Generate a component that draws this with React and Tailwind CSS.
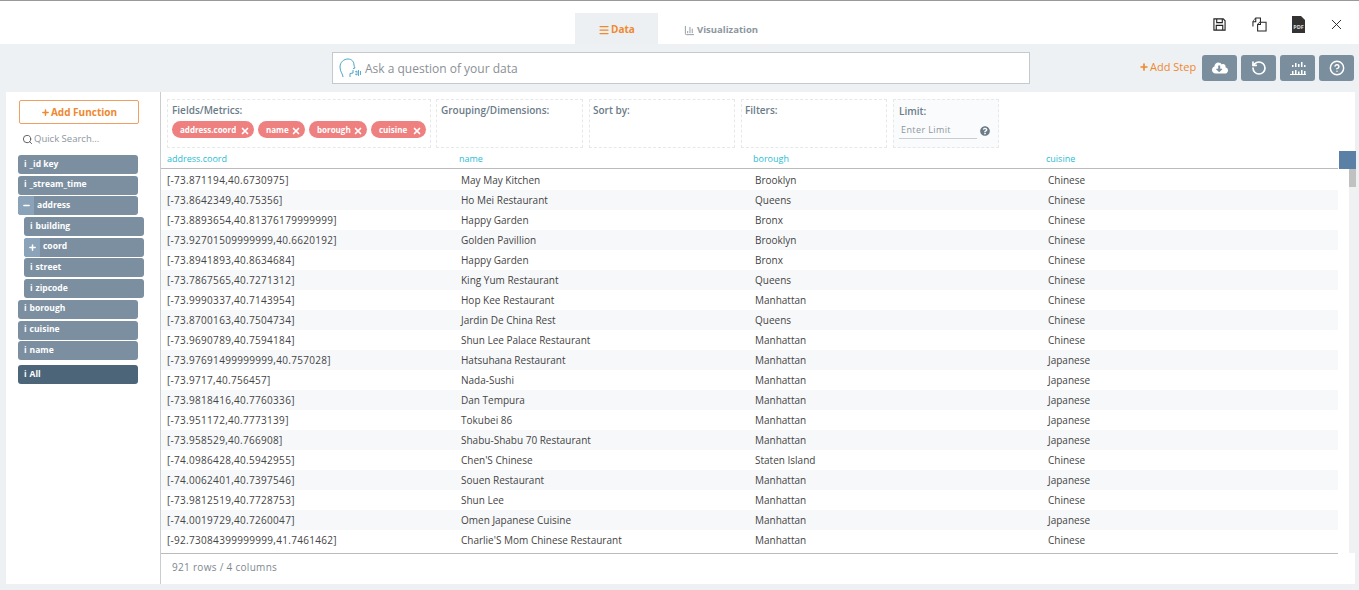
import { Plus, Minus, Search, Menu, BarChart3, X, RotateCcw, CircleHelp } from "lucide-react"
import { FaCloudDownloadAlt, FaQuestionCircle } from "react-icons/fa"

const rows = [
  ["[-73.871194,40.6730975]", "May May Kitchen", "Brooklyn", "Chinese"],
  ["[-73.8642349,40.75356]", "Ho Mei Restaurant", "Queens", "Chinese"],
  ["[-73.8893654,40.81376179999999]", "Happy Garden", "Bronx", "Chinese"],
  ["[-73.92701509999999,40.6620192]", "Golden Pavillion", "Brooklyn", "Chinese"],
  ["[-73.8941893,40.8634684]", "Happy Garden", "Bronx", "Chinese"],
  ["[-73.7867565,40.7271312]", "King Yum Restaurant", "Queens", "Chinese"],
  ["[-73.9990337,40.7143954]", "Hop Kee Restaurant", "Manhattan", "Chinese"],
  ["[-73.8700163,40.7504734]", "Jardin De China Rest", "Queens", "Chinese"],
  ["[-73.9690789,40.7594184]", "Shun Lee Palace Restaurant", "Manhattan", "Chinese"],
  ["[-73.97691499999999,40.757028]", "Hatsuhana Restaurant", "Manhattan", "Japanese"],
  ["[-73.9717,40.756457]", "Nada-Sushi", "Manhattan", "Japanese"],
  ["[-73.9818416,40.7760336]", "Dan Tempura", "Manhattan", "Japanese"],
  ["[-73.951172,40.7773139]", "Tokubei 86", "Manhattan", "Japanese"],
  ["[-73.958529,40.766908]", "Shabu-Shabu 70 Restaurant", "Manhattan", "Japanese"],
  ["[-74.0986428,40.5942955]", "Chen'S Chinese", "Staten Island", "Chinese"],
  ["[-74.0062401,40.7397546]", "Souen Restaurant", "Manhattan", "Japanese"],
  ["[-73.9812519,40.7728753]", "Shun Lee", "Manhattan", "Chinese"],
  ["[-74.0019729,40.7260047]", "Omen Japanese Cuisine", "Manhattan", "Japanese"],
  ["[-92.73084399999999,41.7461462]", "Charlie'S Mom Chinese Restaurant", "Manhattan", "Chinese"],
]

function Field({ label, sub, mark = "i", dark }) {
  return (
    <div className={`flex h-[19px] w-[120px] items-center rounded-[3px] text-[8.5px] font-bold text-white ${sub ? "ml-[6px]" : ""} ${dark ? "bg-[#4d6579]" : "bg-[#7c8fa0]"}`}>
      {mark === "i" ? (
        <span className="pb-[1px] pl-[6px] pr-[3px]">i</span>
      ) : (
        <span className="mr-[3px] flex h-full w-[16px] items-center justify-center rounded-l-[3px] bg-[#8aa3b8]">
          {mark === "+" ? <Plus size={9} strokeWidth={4} /> : <Minus size={9} strokeWidth={4} />}
        </span>
      )}
      <span className="pb-[1px]">{label}</span>
    </div>
  )
}

function Chip({ label, width }) {
  return (
    <span className={`flex h-[17px] items-center justify-between rounded-full bg-[#ee8080] pl-[8px] pr-[4px] text-[8px] font-bold text-white ${width}`}>
      {label}
      <X size={10} strokeWidth={4} className="mt-[2px]" />
    </span>
  )
}

function FilterBox({ title, width }) {
  return (
    <div className={`h-[49px] border border-dashed border-[#e6e8ea] pt-[3px] text-[10px] font-semibold text-[#6b7b88] ${width}`}>
      {title}
    </div>
  )
}

function ToolButton({ children }) {
  return (
    <button className="flex h-[26px] w-[35px] items-center justify-center rounded-[3px] bg-[#7b8e9e] text-white">
      {children}
    </button>
  )
}

function App() {
  return (
    <div className="h-[590px] w-[1359px] overflow-hidden bg-[#edf1f4] font-['Open_Sans',sans-serif]">
      {/* top bar */}
      <div className="flex h-[44px] border-t border-[#999] bg-white">
        <div className="ml-[575px] mt-[12px] flex h-[31px] w-[83px] items-center justify-center gap-[1px] bg-[#edf0f3] pt-[2px] text-[10px] font-bold text-[#f0882e]">
          <Menu size={12} strokeWidth={2.5} />
          Data
        </div>
        <div className="ml-[26px] mt-[12px] flex h-[31px] items-center gap-[2px] pt-[4px] text-[9.5px] font-bold text-[#8c969e]">
          <BarChart3 size={11} />
          Visualization
        </div>
        <div className="ml-[455px] mt-[10px] flex h-[26px] items-center text-[#222]">
          <svg width="13" height="13" viewBox="0 0 14 14" fill="none" stroke="#222" strokeWidth="1.2">
            <path d="M1 1h10l2 2v10H1z" />
            <path d="M4 1v4h6V1M3.500 13V8h7v5" />
          </svg>
          <svg width="15" height="15" viewBox="0 0 16 16" fill="white" stroke="#222" strokeWidth="1.1" className="ml-[26px]">
            <path d="M1 10V5l3-4h5v5" />
            <path d="M6 15V8l2.500-2.500H15V15z" />
            <path d="M1 5h3V1M6 8h3V5.500" />
          </svg>
          <svg width="13" height="17" viewBox="0 0 13 17" className="ml-[25px]">
            <path d="M0 0h9l4 4v13H0z" fill="#333" />
            <text x="6.500" y="12.500" textAnchor="middle" fontSize="5.500" fontWeight="700" fill="#ddd">PDF</text>
          </svg>
          <X size={17} strokeWidth={1.3} className="ml-[23px]" />
        </div>
      </div>

      {/* question bar */}
      <div className="flex h-[48px] items-start">
        <div className="ml-[332px] mt-[8px] flex h-[32px] w-[698px] items-center border border-[#c4c9cd] bg-white pl-[6px] pt-[2px] text-[12px] text-[#8a9095]">
          <svg width="22" height="24" viewBox="0 0 22 24" fill="none" stroke="#4aa5c9" strokeWidth="1" className="mb-[2px] mr-[4px]">
            <path d="M4 21c0-3-3-5-3-10C1 6 5 3 9 3s6 3 6 6c0 1 .5 2 1 3l-2 .5" />
            <path d="M14 14v3l-3 .5V21" />
            <path d="M16 16l2-1v4l-2-1M19.500 14v6M21.500 15v4" strokeWidth=".9" />
          </svg>
          Ask a question of your data
        </div>
        <div className="ml-[109px] mt-[13px] flex items-center gap-[1px] pt-[2px] text-[11px] text-[#f0882e]">
          <Plus size={10} strokeWidth={4} />
          Add Step
        </div>
        <div className="ml-[6px] mt-[11px] flex gap-[4px]">
          <ToolButton><FaCloudDownloadAlt size={16} /></ToolButton>
          <ToolButton><RotateCcw size={16} strokeWidth={2.5} /></ToolButton>
          <ToolButton>
            <svg width="16" height="13" viewBox="0 0 16 13" fill="white">
              <path d="M2 3h1.500v2H2zM5 1h1.500v4H5zM8 2h1.500v3H8zM11 0h1.500v5H11zM14 3h1.500v2H14z" />
              <path d="M0 12h16v1H0zM2 9h1.500v3H2zM5 8h1.500v4H5zM8 9.500h1.500V12H8zM11 8h1.500v4H11zM14 9h1.500v3H14z" />
            </svg>
          </ToolButton>
          <ToolButton><CircleHelp size={16} strokeWidth={2.2} /></ToolButton>
        </div>
      </div>

      {/* main card */}
      <div className="ml-[6px] flex h-[492px] w-[1349px] bg-white">
        <aside className="h-full w-[155px] shrink-0 border-r border-[#c9cdd0] pl-[12px] pt-[8px]">
          <button className="ml-[1px] flex h-[24px] w-[120px] items-center justify-center gap-[1px] rounded-[2px] border border-[#f0a060] text-[10px] font-bold text-[#f0882e]">
            <Plus size={9} strokeWidth={4} />
            Add Function
          </button>
          <div className="ml-[4px] mt-[8px] flex h-[14px] items-center gap-[1px] text-[9.500px] text-[#8c969e]">
            <Search size={11} className="text-[#555]" />
            Quick Search...
          </div>
          <div className="mt-[9px] flex flex-col gap-[1.700px]">
            <Field label="_id key" />
            <Field label="_stream_time" />
            <Field label="address" mark="-" />
            <Field label="building" sub />
            <Field label="coord" mark="+" sub />
            <Field label="street" sub />
            <Field label="zipcode" sub />
            <Field label="borough" />
            <Field label="cuisine" />
            <Field label="name" />
            <div className="mt-[3px]">
              <Field label="All" dark />
            </div>
          </div>
        </aside>

        <div className="min-w-0 flex-1">
          {/* query boxes */}
          <div className="ml-[6px] mt-[7px] flex gap-[5px]">
            <div className="h-[49px] w-[264px] border border-dashed border-[#e6e8ea] pl-[4px] pt-[3px] text-[10px] font-semibold text-[#6b7b88]">
              Fields/Metrics:
              <div className="mt-[3px] flex gap-[4px]">
                <Chip label="address.coord" width="w-[82px]" />
                <Chip label="name" width="w-[47px]" />
                <Chip label="borough" width="w-[58px]" />
                <Chip label="cuisine" width="w-[55px]" />
              </div>
            </div>
            <FilterBox title="Grouping/Dimensions:" width="w-[147px] mr-[1px] pl-[4px]" />
            <FilterBox title="Sort by:" width="w-[146px] mr-[1px] pl-[3px]" />
            <FilterBox title="Filters:" width="w-[146px] mr-[1px] pl-[3px]" />
            <div className="h-[49px] w-[106px] border border-dashed border-[#e6e8ea] bg-[#fafbfc] px-[5px] pt-[4px] text-[10px] font-semibold text-[#6b7b88]">
              Limit:
              <div className="mt-[4px] flex items-center justify-between pr-[3px]">
                <span className="w-[78px] border-b border-[#c9cdd0] pb-[1px] pl-[2px] text-[9px] font-normal tracking-[0.4px] text-[#8c969e]">Enter Limit</span>
                <FaQuestionCircle size={10} className="text-[#6b7b88]" />
              </div>
            </div>
          </div>

          {/* table */}
          <div className="mt-[3px] flex">
            <div className="w-[1177px] shrink-0">
              <div className="grid h-[18px] grid-cols-[292px_294px_293px_1fr] items-center border-b border-[#bbb] pb-[2px] pl-[6px] text-[9px] text-[#2bbcd4]">
                <span>address.coord</span>
                <span>name</span>
                <span>borough</span>
                <span>cuisine</span>
              </div>
              <div className="mt-[1px]">
                {rows.map((r, i) => (
                  <div
                    key={i}
                    className={`grid h-[20px] grid-cols-[294px_294px_293px_1fr] items-center pl-[6px] text-[10px] text-[#444] ${i % 2 ? "bg-[#f7f8fa]" : "bg-white"}`}
                  >
                    <span className="tracking-[0.3px]">{r[0]}</span>
                    <span>{r[1]}</span>
                    <span>{r[2]}</span>
                    <span>{r[3]}</span>
                  </div>
                ))}
              </div>
              {/* footer */}
              <div className="mt-[3px] border-t border-[#bbb] pl-[11px] pt-[6px] text-[10px] tracking-[0.3px] text-[#7d8891]">
                921 rows / 4 columns
              </div>
            </div>
            <div className="ml-[1px] flex w-[17px] shrink-0 flex-col items-end">
              <div className="h-[18px] w-full bg-[#5b80a5]"></div>
              <div className="h-[384px] w-[7px] bg-[#f0f1f2]">
                <div className="h-[18px] w-full bg-[#c1c1c1]"></div>
              </div>
            </div>
          </div>
        </div>
      </div>
    </div>
  )
}

export default App
